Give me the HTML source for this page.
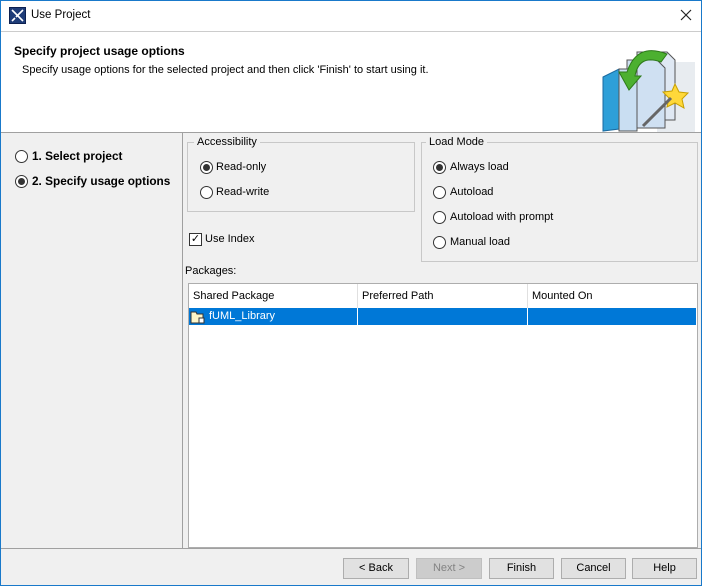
<!DOCTYPE html>
<html><head><style>
*{box-sizing:border-box;margin:0;padding:0}
body{width:702px;height:586px;position:relative;background:#f0f0f0;font-family:"Liberation Sans",sans-serif;font-size:11px;color:#000;overflow:hidden}
.a{position:absolute;white-space:nowrap}
.r{position:absolute;width:13px;height:13px;border:1px solid #333;border-radius:50%;background:#fff}
.r.on::after{content:"";position:absolute;left:2px;top:2px;width:7px;height:7px;border-radius:50%;background:#333}
.g{position:absolute;border:1px solid #c8c8c8}
.gl{position:absolute;background:#f0f0f0;padding:0 3px}
.b{position:absolute;top:558px;height:21px;border:1px solid #adadad;background:#e1e1e1;text-align:center;line-height:19px}
</style></head><body>
<div class="a" style="left:0;top:0;width:702px;height:32px;background:#fff"></div>
<svg class="a" style="left:9px;top:7px" width="17" height="17"><rect x="0.5" y="0.5" width="16" height="16" fill="#1e3c78" stroke="#0c2050"/><path d="M3 3 L14 14 M14 3 L7 10 M3 14 L6 11" stroke="#fff" stroke-width="1.6"/></svg>
<div class="a" style="left:31px;top:9px;font-size:11.5px">Use Project</div>
<svg class="a" style="left:680px;top:9px" width="12" height="12"><path d="M1 1L11 11M11 1L1 11" stroke="#222" stroke-width="1.2"/></svg>
<div class="a" style="left:0;top:31px;width:702px;height:102px;background:#fff;border-top:1px solid #ccc;border-bottom:1px solid #a0a0a0"></div>
<div class="a" style="left:14px;top:44px;font-weight:bold;font-size:12px">Specify project usage options</div>
<div class="a" style="left:22px;top:64px">Specify usage options for the selected project and then click 'Finish' to start using it.</div>
<svg class="a" style="left:597px;top:32px" width="102" height="100">
<rect x="60" y="30" width="38" height="70" fill="#e8ecf0"/>
<path d="M40 20 h30 l8 8 v60 h-38z" fill="#dfe8f3" stroke="#555"/>
<path d="M30 28 h30 l8 8 v60 h-38z" fill="#cfe0f2" stroke="#555"/>
<path d="M6 45 l16-8 v60 l-16 2z" fill="#2e9fd8" stroke="#1a6aa0"/>
<path d="M22 37 h18 v62 h-18z" fill="#c9def2" stroke="#555"/>
<path d="M30 40 q10-30 40-18 l-6 8 q-22-8-26 14 l6 0 -12 14 -10-18z" fill="#4cb030" stroke="#2d7a1a"/>
<path d="M78 52 l4 8 9 1-6 6 2 9-9-5-8 4 2-9-6-6 9-1z" fill="#ffd83a" stroke="#c8a000"/>
<path d="M74 66 L46 94" stroke="#666" stroke-width="3"/>
</svg>
<div class="a" style="left:182px;top:133px;width:1px;height:415px;background:#a0a0a0"></div>
<div class="a" style="left:0;top:548px;width:702px;height:1px;background:#a0a0a0"></div>
<div class="r" style="left:15px;top:150px"></div><div class="a" style="left:32px;top:149px;font-weight:bold;font-size:11.8px">1. Select project</div>
<div class="r on" style="left:15px;top:175px"></div><div class="a" style="left:32px;top:174px;font-weight:bold;font-size:11.8px">2. Specify usage options</div>
<div class="g" style="left:187px;top:142px;width:228px;height:70px"></div>
<div class="gl" style="left:194px;top:136px">Accessibility</div>
<div class="r on" style="left:200px;top:161px"></div><div class="a" style="left:216px;top:161px">Read-only</div>
<div class="r" style="left:200px;top:186px"></div><div class="a" style="left:216px;top:186px">Read-write</div>
<div class="g" style="left:421px;top:142px;width:277px;height:120px"></div>
<div class="gl" style="left:426px;top:136px">Load Mode</div>
<div class="r on" style="left:433px;top:161px"></div><div class="a" style="left:450px;top:161px">Always load</div>
<div class="r" style="left:433px;top:186px"></div><div class="a" style="left:450px;top:186px">Autoload</div>
<div class="r" style="left:433px;top:211px"></div><div class="a" style="left:450px;top:211px">Autoload with prompt</div>
<div class="r" style="left:433px;top:236px"></div><div class="a" style="left:450px;top:236px">Manual load</div>
<div class="a" style="left:189px;top:233px;width:13px;height:13px;border:1px solid #333;background:#fff;font-size:11px;line-height:11px;text-align:center">✓</div>
<div class="a" style="left:205px;top:233px">Use Index</div>
<div class="a" style="left:185px;top:265px">Packages:</div>
<div class="a" style="left:188px;top:283px;width:510px;height:265px;background:#fff;border:1px solid #adadad"></div>
<div class="a" style="left:357px;top:284px;width:1px;height:24px;background:#e0e0e0"></div>
<div class="a" style="left:527px;top:284px;width:1px;height:24px;background:#e0e0e0"></div>
<div class="a" style="left:193px;top:290px">Shared Package</div>
<div class="a" style="left:362px;top:290px">Preferred Path</div>
<div class="a" style="left:532px;top:290px">Mounted On</div>
<div class="a" style="left:189px;top:308px;width:507px;height:17px;background:#0078d7"></div>
<div class="a" style="left:357px;top:308px;width:1px;height:17px;background:#fff"></div>
<div class="a" style="left:527px;top:308px;width:1px;height:17px;background:#fff"></div>
<svg class="a" style="left:190px;top:310px" width="16" height="14"><path d="M1 2h5l1 2h6v9H1z" fill="#fdf6c8" stroke="#333"/><rect x="9" y="8" width="5" height="5" fill="#fff" stroke="#333"/></svg>
<div class="a" style="left:209px;top:310px;color:#fff">fUML_Library</div>
<div class="b" style="left:343px;width:66px">&lt; Back</div>
<div class="b" style="left:416px;width:66px;background:#ccc;border-color:#bfbfbf;color:#838383">Next &gt;</div>
<div class="b" style="left:489px;width:65px">Finish</div>
<div class="b" style="left:561px;width:65px">Cancel</div>
<div class="b" style="left:632px;width:65px">Help</div>
<div class="a" style="left:0;top:0;width:702px;height:586px;border:1px solid #1979ca"></div>
</body></html>
